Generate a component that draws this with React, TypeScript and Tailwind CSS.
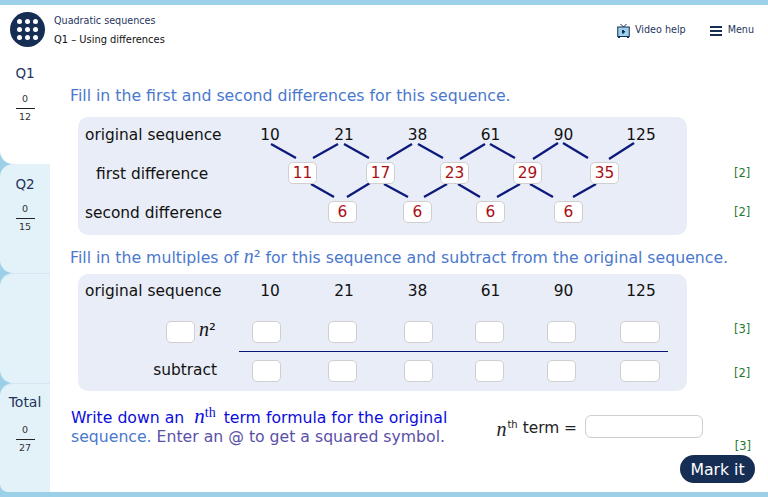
import type { ReactNode } from "react";

const Box = ({ v, w = "w-[29px]", cls = "" }: { v?: string; w?: string; cls?: string }) => (
  <div className={`${w} h-[22px] shrink-0 rounded-[5px] border border-[#cfcfcf] bg-white flex items-center justify-center pt-[2px] text-[15.4px] text-[#a80f14] leading-none ${cls}`}>{v}</div>
);
const Cell = ({ children, w }: { children?: ReactNode; w: string }) => (
  <div className={`${w} flex items-center justify-center shrink-0`}>{children}</div>
);
const Tab = ({ title, a, b, gap, titleCls = "text-[13.5px]" }: { title: string; a: string; b: string; gap: string; titleCls?: string }) => (
  <div className="flex flex-col items-center text-[#1f3560]">
    <div className={`${titleCls} leading-[18px]`}>{title}</div>
    <div className={`${gap} w-[19px] flex flex-col items-center text-[9.5px] leading-[12px] text-[#333]`}>
      <div className="w-full text-center border-b border-[#222] pb-[3px]">{a}</div>
      <div className="pt-[2px]">{b}</div>
    </div>
  </div>
);
const cols = ["w-[74px]", "w-[74px]", "w-[73px]", "w-[73px]", "w-[73px]", "w-[82px]"];
const seq = ["10", "21", "38", "61", "90", "125"];
const Lines = () => {
  const l = [
    [271,144,296,158],[313,158,338,144],[344,144,369,158],[387,159,412,144],[418,144,443,158],[460,159,485,144],[490,144,515,158],[533,159,558,143],[563,143,588,158],[609,159,634,143],
    [311,184,334,197],[347,197,370,183],[384,184,408,197],[424,197,447,184],[458,184,480,197],[497,197,520,184],[530,184,553,197],[573,197,596,184],
  ];
  return (
    <svg className="absolute left-[-78px] top-[-117px] w-[768px] h-[497px] pointer-events-none">
      {l.map((p, i) => <line key={i} x1={p[0]} y1={p[1]} x2={p[2]} y2={p[3]} stroke="#0c1a7a" strokeWidth="2.3" />)}
    </svg>
  );
};
const N = ({ cls = "" }: { cls?: string }) => <i className={`font-['Liberation_Serif',serif] leading-[0] ${cls}`}>n</i>;
const Sq = () => <span className="text-[17px] leading-[0]">²</span>;
const Mark = ({ v, cls = "" }: { v: string; cls?: string }) => (
  <div className={`text-[11.5px] leading-[14px] text-[#1f7a2a] ${cls}`}>{v}</div>
);
const InputRow = () => (
  <>
    <Box /><Box cls="ml-[47px]" /><Box cls="ml-[47px]" /><Box cls="ml-[42px]" /><Box cls="ml-[43px]" /><Box w="w-[40px]" cls="ml-[44px]" />
  </>
);

export default function App() {
  return (
    <div className="w-[768px] h-[497px] overflow-hidden bg-white flex flex-col font-['DejaVu_Sans',sans-serif] text-[#111]">
      <div className="h-[5px] bg-[#9bd0e8] shrink-0" />
      <div className="h-[52px] shrink-0 flex items-start pl-[10px] pr-[14px]">
        <div className="mt-[7px] w-[35px] h-[35px] rounded-full bg-[#162d54] grid grid-cols-3 gap-[2px] p-[6.5px] shrink-0">
          {Array.from({ length: 9 }).map((_, i) => <span key={i} className="w-[5.5px] h-[5.5px] rounded-full bg-white" />)}
        </div>
        <div className="ml-[9px] mt-[7px] leading-[18.5px]">
          <div className="text-[9.6px] text-[#1f3560]">Quadratic sequences</div>
          <div className="text-[9.9px] text-[#111]">Q1 – Using differences</div>
        </div>
        <div className="ml-auto flex items-center mt-[18px] text-[9.6px] text-[#1f3560]">
          <svg width="13" height="15" viewBox="0 0 13 15" className="mr-[5px]">
            <path d="M3.5 1l3 3 3-3" fill="none" stroke="#162d54" strokeWidth="1" />
            <rect x="0.75" y="4" width="11.5" height="9.5" fill="#9bd0e8" stroke="#162d54" strokeWidth="1" />
            <path d="M5 7h2v1h1v1.5H7v1H5z" fill="#162d54" />
            <path d="M1 14.5h2M10 14.5h2" stroke="#162d54" />
          </svg>
          <span>Video help</span>
          <span className="ml-[24px] mr-[6px] w-[12px] flex flex-col gap-[2px]">
            <span className="h-[2px] bg-[#162d54]" /><span className="h-[2px] bg-[#162d54]" /><span className="h-[2px] bg-[#162d54]" />
          </span>
          <span>Menu</span>
        </div>
      </div>
      <div className="flex-1 flex min-h-0">
        <div className="w-[50px] shrink-0 flex flex-col bg-[#9bd0e8]">
          <div className="h-[107px] bg-white rounded-bl-[13px] pt-[7px]">
            <Tab title="Q1" a="0" b="12" gap="mt-[11px]" />
          </div>
          <div className="h-[109px] bg-[#e3f1f8] rounded-tl-[13px] rounded-bl-[13px] pt-[11px]">
            <Tab title="Q2" a="0" b="15" gap="mt-[10px]" />
          </div>
          <div className="h-[110px] bg-[#e3f1f8] rounded-tl-[13px] rounded-bl-[13px] border-t border-[#d3e8f3]" />
          <div className="flex-1 bg-[#e3f1f8] rounded-tl-[13px] rounded-bl-[8px] border-t border-[#d3e8f3] pt-[9px]">
            <Tab title="Total" a="0" b="27" gap="mt-[13px]" titleCls="text-[14px]" />
          </div>
        </div>
        <div className="flex-1 min-w-0 flex flex-col">
          <div className="pl-[20px] mt-[27px] h-[24px] text-[15.72px] leading-[24px] text-[#4a78cc]">Fill in the first and second differences for this sequence.</div>
          <div className="flex mt-[9px] ml-[28px]">
            <div className="relative w-[609px] h-[118px] shrink-0 bg-[#e9edf7] rounded-[10px] text-[15.4px]">
              <Lines />
              <div className="relative flex h-[36px] pt-[2px] items-center">
                <div className="w-[155px] pl-[7px]">original sequence</div>
                {seq.map((s, i) => <Cell key={s} w={cols[i]}>{s}</Cell>)}
              </div>
              <div className="relative flex h-[22px] mt-[9px] items-center">
                <div className="w-[210px] pl-[18px] pt-[4px]">first difference</div>
                <Box v="11" /><Box v="17" cls="ml-[49px]" /><Box v="23" cls="ml-[45px]" /><Box v="29" cls="ml-[44px]" /><Box v="35" cls="ml-[48px]" />
              </div>
              <div className="relative flex h-[22px] mt-[17px] items-center">
                <div className="w-[250px] pl-[7px] pt-[4px]">second difference</div>
                <Box v="6" /><Box v="6" cls="ml-[46px]" /><Box v="6" cls="ml-[44px]" /><Box v="6" cls="ml-[49px]" />
              </div>
            </div>
            <div className="ml-[47px] pt-[49px] flex flex-col gap-[25px]">
              <Mark v="[2]" /><Mark v="[2]" />
            </div>
          </div>
          <div className="pl-[20px] mt-[11px] h-[24px] text-[15.72px] leading-[24px] text-[#4a78cc] whitespace-nowrap">Fill in the multiples of <N cls="text-[20px]" /><Sq /> for this sequence and subtract from the original sequence.</div>
          <div className="flex mt-[4px] ml-[28px]">
            <div className="w-[609px] h-[117px] shrink-0 bg-[#e9edf7] rounded-[10px] text-[15.4px]">
              <div className="flex h-[33px] pt-[2px] items-center">
                <div className="w-[155px] pl-[7px]">original sequence</div>
                {seq.map((s, i) => <Cell key={s} w={cols[i]}>{s}</Cell>)}
              </div>
              <div className="flex h-[22px] mt-[14px] items-center">
                <div className="w-[174px] pl-[88px] flex items-center shrink-0">
                  <Box /><span className="ml-[4px] whitespace-nowrap"><N cls="text-[20px]" /><Sq /></span>
                </div>
                <InputRow />
              </div>
              <div className="ml-[161px] mt-[8px] w-[429px] h-[1px] bg-[#0a1578]" />
              <div className="flex h-[22px] mt-[8px] items-center">
                <div className="w-[174px] pr-[35px] text-right shrink-0">subtract</div>
                <InputRow />
              </div>
            </div>
            <div className="ml-[47px] pt-[48px] flex flex-col gap-[30px]">
              <Mark v="[3]" /><Mark v="[2]" />
            </div>
          </div>
          <div className="pl-[21px] mt-[16px] flex">
            <div className="text-[15.7px] leading-[20px] text-[#4a78cc] w-[400px] shrink-0 whitespace-nowrap">
              <div className="h-[20px] pt-[1px] text-[#0c0cdc]">Write down an <N cls="text-[21px] ml-[5px]" /><span className="font-['Liberation_Serif',serif] text-[14px] leading-[0] relative top-[-6px] mr-[3px]">th</span> term formula for the original</div>
              <div><span>sequence. </span><span className="text-[#5a4fa8]">Enter an @ to get a squared symbol.</span></div>
            </div>
            <div className="flex-1 flex flex-col items-end pr-[13px]">
              <div className="mt-[8px] mr-[52px] flex items-center h-[23px] text-[15.4px] text-[#222] whitespace-nowrap">
                <N cls="text-[20px] mt-[5px]" /><span className="text-[10px] relative top-[-2px] ml-[1px]">th</span><span className="ml-[5px] mt-[5px]">term =</span>
                <div className="ml-[8px] w-[118px] h-[23px] bg-white border border-[#cfcfcf] rounded-[6px]" />
              </div>
              <Mark v="[3]" cls="mr-[4px] mt-[1px]" />
              <div className="mt-[2px] w-[75px] h-[28px] pt-[1px] rounded-full bg-[#162d54] text-white text-[15.7px] flex items-center justify-center">Mark it</div>
            </div>
          </div>
        </div>
      </div>
      <div className="h-[5px] bg-[#9bd0e8] shrink-0" />
    </div>
  );
}
